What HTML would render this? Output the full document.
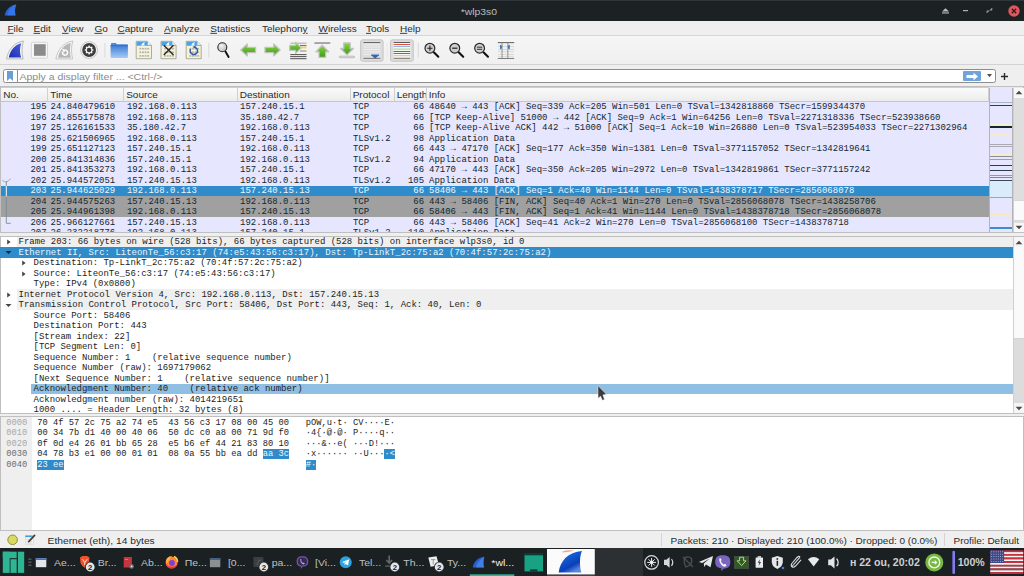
<!DOCTYPE html>
<html><head><meta charset="utf-8"><style>
*{margin:0;padding:0;box-sizing:border-box}
html,body{width:1024px;height:576px;overflow:hidden;background:#efefef;font-family:"Liberation Sans",sans-serif;font-size:10px;color:#232627}
.a{position:absolute}
#title{position:absolute;left:0;top:0;width:1024px;height:21px;background:#1c2124;border-top:1px solid #30363a}
#menubar{position:absolute;left:0;top:21px;width:1024px;height:14.5px;background:#efefef;border-bottom:1px solid #d6d6d6}
.mi{position:absolute;top:22.6px;font-size:10px;color:#2a2c2d;white-space:pre;transform:scaleY(0.88);transform-origin:0 9px}
.mi u{text-decoration:underline;text-decoration-thickness:0.8px;text-underline-offset:1.2px}
#toolbar{position:absolute;left:0;top:35.5px;width:1024px;height:29px;background:linear-gradient(#f5f5f5,#f0f0f0);border-bottom:1px solid #d3d3d3}
#filterbar{position:absolute;left:0;top:64.5px;width:1024px;height:21.5px;background:#efefef}
#fbox{position:absolute;left:2.9px;top:69.2px;width:993px;height:13.5px;background:#fff;border:1px solid #8d8d8d;border-radius:2.5px}
#plist{position:absolute;left:0;top:86px;width:1024px;height:147px;background:#e7e6ff;border:1px solid #bfbfbf}
.hdr{position:absolute;top:87px;height:14.5px;overflow:hidden;border-top:1px solid #cdcdcd;background:linear-gradient(#fafafa,#ececec);border-right:1px solid #d0d0d0;border-bottom:1px solid #c6c6c6;font-size:10px;color:#232627}
.hdr span{position:absolute;top:0.6px;left:2.2px;white-space:pre;transform:scaleY(0.88);transform-origin:0 9px;color:#2a2c2d}
.r{position:absolute;left:1px;width:988px;height:10.5px;background:#e7e6ff;color:#12272e;font-family:"Liberation Mono",monospace;font-size:8.975px;line-height:10.5px}
.r.sel{background:#2f8bc9;color:#f2f6fa}
.r.fin{background:#a0a0a0;color:#12272e}
.c{position:absolute;top:0.6px;white-space:pre;transform:scaleY(1.1);transform-origin:0 8px}
#det{position:absolute;left:0;top:235.5px;width:1024px;height:178px;background:#fff;border:1px solid #bfbfbf}
.d{position:absolute;height:10.5px;right:11px}
.d.top{background:#efefef}
.d.sel{background:#2f8bc9}
.d.rel{background:#8fbfe2}
.dt{position:absolute;white-space:pre;transform:scaleY(1.08);transform-origin:0 8px;font-family:"Liberation Mono",monospace;font-size:8.975px;line-height:10.5px;color:#1d1d1d}
.dt.wt{color:#eef4f8}
.ar{position:absolute}
#hex{position:absolute;left:0;top:416px;width:1024px;height:115px;background:#fff;border:1px solid #bfbfbf}
#hexoff{position:absolute;left:1px;top:417px;width:31px;height:113px;background:#efefef}
.ho{position:absolute;left:6.2px;white-space:pre;font-family:"Liberation Mono",monospace;font-size:8.745px;line-height:10.5px;color:#a9a9a9}
.ho.hod{color:#6d6d6d}
.hx{position:absolute;left:37.3px;white-space:pre;font-family:"Liberation Mono",monospace;font-size:8.745px;line-height:10.5px;color:#1d1d1d}
.hs{background:#2f8bc9;color:#f2f6fa}
#status{position:absolute;left:0;top:531px;width:1024px;height:17px;background:#efefef}
.st{position:absolute;top:534.7px;white-space:pre;font-size:10px;color:#2a2c2d;transform:scaleY(0.88);transform-origin:0 9px}
#taskbar{position:absolute;left:0;top:548px;width:1024px;height:28px;background:#1c2124}
.tt{position:absolute;top:556px;white-space:pre;font-size:10.5px;color:#c6c8c9;transform:scaleY(0.92);transform-origin:0 9px}
.badge{position:absolute;width:9.5px;height:9.5px;border-radius:50%;background:#d9dbdc;border:1px solid #2a2f32;color:#1c2124;font-size:7.5px;font-weight:bold;text-align:center;line-height:8px}
</style></head><body>
<div id="title"></div>
<svg class="a" style="left:3.5px;top:4px" width="13" height="12" viewBox="0 0 13 12"><path d="M12.3 0.6 C8 1 2.5 4 0.6 11.4 L11.6 11.4 C10.6 8 10.8 4 12.3 0.6Z" fill="#2a63d6"/><path d="M12.3 0.6 C9 1.5 5 4.5 3.5 11.4 L11.6 11.4 C10.6 8 10.8 4 12.3 0.6Z" fill="#3d7ff0" opacity="0.6"/></svg>
<span class="a" style="left:460.7px;top:5.6px;color:#b9bdbf;font-size:10.4px;white-space:pre;transform:scaleY(0.9);transform-origin:0 9px">*wlp3s0</span>
<svg class="a" style="left:0;top:0" width="1024" height="21" viewBox="0 0 1024 21"><path d="M945.5 8.3 L949 11.6 H942Z" fill="#b6c0c2"/><rect x="942" y="12.4" width="7" height="1.1" fill="#b6c0c2"/><rect x="963" y="10" width="5" height="1.2" fill="#a9b1b3"/><path d="M992.4 7.8 L992.2 10.6 L989.6 10.4Z M986.5 13.2 L986.7 10.4 L989.3 10.6Z" fill="#8f999b"/><path d="M989.6 10.4 L992 8.2 M989.3 10.6 L987 12.8" stroke="#8f999b" stroke-width="0.7"/></svg>
<svg class="a" style="left:1007.5px;top:4.5px" width="12" height="12" viewBox="0 0 12 12"><circle cx="6" cy="6" r="5.7" fill="#e2575d"/><path d="M3.8 3.8 L8.2 8.2 M8.2 3.8 L3.8 8.2" stroke="#2b1b1c" stroke-width="1.3"/></svg>

<div id="menubar"></div>
<span class="mi" style="left:7.5px"><u>F</u>ile</span><span class="mi" style="left:33.5px"><u>E</u>dit</span><span class="mi" style="left:62px"><u>V</u>iew</span><span class="mi" style="left:94.5px"><u>G</u>o</span><span class="mi" style="left:117.5px"><u>C</u>apture</span><span class="mi" style="left:164px"><u>A</u>nalyze</span><span class="mi" style="left:210.3px"><u>S</u>tatistics</span><span class="mi" style="left:262px">Telephon<u>y</u></span><span class="mi" style="left:318.5px"><u>W</u>ireless</span><span class="mi" style="left:366px"><u>T</u>ools</span><span class="mi" style="left:400px"><u>H</u>elp</span>
<div id="toolbar"></div>
<svg class="a" style="left:0;top:0" width="1024" height="66" viewBox="0 0 1024 66"><defs>
<linearGradient id="gblue" x1="0" y1="1" x2="1" y2="0"><stop offset="0" stop-color="#1e2ab0"/><stop offset="1" stop-color="#4560e0"/></linearGradient>
<linearGradient id="gfold" x1="0" y1="0" x2="0" y2="1"><stop offset="0" stop-color="#3d7ad6"/><stop offset="1" stop-color="#a8cbf6"/></linearGradient>
<linearGradient id="ggreen" x1="0" y1="0" x2="0" y2="1"><stop offset="0" stop-color="#8ad443"/><stop offset="1" stop-color="#3d9a1e"/></linearGradient>
<radialGradient id="gmag" cx="0.4" cy="0.35" r="0.7"><stop offset="0" stop-color="#f4f4f4"/><stop offset="1" stop-color="#b8b8b8"/></radialGradient>
</defs><path d="M6.6 58.9 C8 50 14 42.5 23.4 41 C21.6 46 21.6 53 23.1 58.9 Z" fill="#f6f6f6" stroke="#aaaaaa" stroke-width="0.8"/><path d="M8.8 57.6 C10 50.5 15 44.5 21.2 43.2 C19.6 48 19.6 53 21.2 57.6 Z" fill="url(#gblue)"/><rect x="31.3" y="42.3" width="16.2" height="15.9" rx="1" fill="#f6f6f6" stroke="#cdcdcd" stroke-width="0.8"/><rect x="34" y="44.2" width="11.7" height="11.6" fill="#8b8b8b"/><path d="M55.9 58.9 C57.3 50 63.3 42.5 72.9 41 C71.1 46 71.1 53 72.6 58.9 Z" fill="#f6f6f6" stroke="#bdbdbd" stroke-width="0.8"/><path d="M58 57.8 C59.3 50.5 64.3 44.5 70.8 43.1 C69.7 48 69.8 53 70.8 57.8 Z" fill="#b7b7b7"/><path d="M65.4 50 A2.6 2.6 0 1 1 62.6 51.6" fill="none" stroke="#fafafa" stroke-width="1.6"/><path d="M62 48.6 L66.2 50 L63.6 52.6Z" fill="#fafafa"/><circle cx="89.1" cy="50" r="8.4" fill="#f9f9f9" stroke="#b4b4b4" stroke-width="0.8"/><circle cx="89.1" cy="50" r="6.9" fill="#3d3d3d"/><polygon points="92.52,49.25 93.56,49.38 93.56,50.62 92.52,50.75 92.05,51.89 92.69,52.72 91.82,53.59 90.99,52.95 89.85,53.42 89.72,54.46 88.48,54.46 88.35,53.42 87.21,52.95 86.38,53.59 85.51,52.72 86.15,51.89 85.68,50.75 84.64,50.62 84.64,49.38 85.68,49.25 86.15,48.11 85.51,47.28 86.38,46.41 87.21,47.05 88.35,46.58 88.48,45.54 89.72,45.54 89.85,46.58 90.99,47.05 91.82,46.41 92.69,47.28 92.05,48.11" fill="#f4f4f4"/><circle cx="89.1" cy="50" r="2.3" fill="#3d3d3d"/><rect x="104.5" y="43" width="0.9" height="14.5" fill="#d6d6d6"/><rect x="208.4" y="43" width="0.9" height="14.5" fill="#d6d6d6"/><rect x="417.8" y="43" width="0.9" height="14.5" fill="#d6d6d6"/><path d="M111 45.2 V43.9 Q111 43.1 111.8 43.1 H115.8 L116.8 44.3 H127 Q127.9 44.3 127.9 45.2Z" fill="#4f8ad8"/><rect x="110.6" y="45" width="17.3" height="13.1" rx="0.8" fill="url(#gfold)"/><rect x="110.6" y="45" width="17.3" height="1.2" fill="#3a6fc4"/><path d="M136.2 41.3 H147.5 L151.5 45.3 V58.699999999999996 H136.2 Z" fill="#f4f2dc" stroke="#9c9a88" stroke-width="0.8"/><path d="M136.6 41.699999999999996 H147.5 L151.1 45.3 V45.8 H136.6 Z" fill="#4aa3e8"/><path d="M147.5 41.3 V45.3 H151.5" fill="#e8f4fc" stroke="#9c9a88" stroke-width="0.5"/><path d="M141.2 45.599999999999994 C141.7 43.8 143.2 42.5 144.7 42.3 C144.2 43.5 144.2 44.599999999999994 144.5 45.599999999999994Z" fill="#fff"/><rect x="139.40" y="47.90" width="1.9" height="1.6" fill="#b4b3a6"/><rect x="142.00" y="47.90" width="1.9" height="1.6" fill="#b4b3a6"/><rect x="144.60" y="47.90" width="1.9" height="1.6" fill="#b4b3a6"/><rect x="147.20" y="47.90" width="1.9" height="1.6" fill="#b4b3a6"/><rect x="139.40" y="51.50" width="1.9" height="1.6" fill="#b4b3a6"/><rect x="142.00" y="51.50" width="1.9" height="1.6" fill="#b4b3a6"/><rect x="144.60" y="51.50" width="1.9" height="1.6" fill="#b4b3a6"/><rect x="147.20" y="51.50" width="1.9" height="1.6" fill="#b4b3a6"/><rect x="139.40" y="55.10" width="1.9" height="1.6" fill="#b4b3a6"/><rect x="142.00" y="55.10" width="1.9" height="1.6" fill="#b4b3a6"/><rect x="144.60" y="55.10" width="1.9" height="1.6" fill="#b4b3a6"/><rect x="147.20" y="55.10" width="1.9" height="1.6" fill="#b4b3a6"/><path d="M161.0 41.3 H172.1 L176.1 45.3 V58.699999999999996 H161.0 Z" fill="#f4f2dc" stroke="#9c9a88" stroke-width="0.8"/><path d="M161.4 41.699999999999996 H172.1 L175.7 45.3 V45.8 H161.4 Z" fill="#4aa3e8"/><path d="M172.1 41.3 V45.3 H176.1" fill="#e8f4fc" stroke="#9c9a88" stroke-width="0.5"/><path d="M166.0 45.599999999999994 C166.5 43.8 168.0 42.5 169.5 42.3 C169.0 43.5 169.0 44.599999999999994 169.3 45.599999999999994Z" fill="#fff"/><rect x="164.20" y="47.90" width="1.9" height="1.6" fill="#b4b3a6"/><rect x="166.80" y="47.90" width="1.9" height="1.6" fill="#b4b3a6"/><rect x="169.40" y="47.90" width="1.9" height="1.6" fill="#b4b3a6"/><rect x="172.00" y="47.90" width="1.9" height="1.6" fill="#b4b3a6"/><rect x="164.20" y="51.50" width="1.9" height="1.6" fill="#b4b3a6"/><rect x="166.80" y="51.50" width="1.9" height="1.6" fill="#b4b3a6"/><rect x="169.40" y="51.50" width="1.9" height="1.6" fill="#b4b3a6"/><rect x="172.00" y="51.50" width="1.9" height="1.6" fill="#b4b3a6"/><rect x="164.20" y="55.10" width="1.9" height="1.6" fill="#b4b3a6"/><rect x="166.80" y="55.10" width="1.9" height="1.6" fill="#b4b3a6"/><rect x="169.40" y="55.10" width="1.9" height="1.6" fill="#b4b3a6"/><rect x="172.00" y="55.10" width="1.9" height="1.6" fill="#b4b3a6"/><path d="M163.8 45.2 L173.5 55 M173.5 45.2 L163.8 55" stroke="#2b2b2b" stroke-width="1.45"/><path d="M186.2 41.3 H197.2 L201.2 45.3 V58.699999999999996 H186.2 Z" fill="#f4f2dc" stroke="#9c9a88" stroke-width="0.8"/><path d="M186.6 41.699999999999996 H197.2 L200.79999999999998 45.3 V45.8 H186.6 Z" fill="#4aa3e8"/><path d="M197.2 41.3 V45.3 H201.2" fill="#e8f4fc" stroke="#9c9a88" stroke-width="0.5"/><path d="M191.2 45.599999999999994 C191.7 43.8 193.2 42.5 194.7 42.3 C194.2 43.5 194.2 44.599999999999994 194.5 45.599999999999994Z" fill="#fff"/><rect x="189.40" y="47.90" width="1.9" height="1.6" fill="#b4b3a6"/><rect x="192.00" y="47.90" width="1.9" height="1.6" fill="#b4b3a6"/><rect x="194.60" y="47.90" width="1.9" height="1.6" fill="#b4b3a6"/><rect x="197.20" y="47.90" width="1.9" height="1.6" fill="#b4b3a6"/><rect x="189.40" y="51.50" width="1.9" height="1.6" fill="#b4b3a6"/><rect x="192.00" y="51.50" width="1.9" height="1.6" fill="#b4b3a6"/><rect x="194.60" y="51.50" width="1.9" height="1.6" fill="#b4b3a6"/><rect x="197.20" y="51.50" width="1.9" height="1.6" fill="#b4b3a6"/><rect x="189.40" y="55.10" width="1.9" height="1.6" fill="#b4b3a6"/><rect x="192.00" y="55.10" width="1.9" height="1.6" fill="#b4b3a6"/><rect x="194.60" y="55.10" width="1.9" height="1.6" fill="#b4b3a6"/><rect x="197.20" y="55.10" width="1.9" height="1.6" fill="#b4b3a6"/><path d="M193.8 47.1 A3.7 3.7 0 1 1 190.6 49" fill="none" stroke="#2f5cae" stroke-width="1.5"/><path d="M192.6 47.1 L195.6 45.4 L195.6 48.8 Z" fill="#2f5cae"/><line x1="225.3" y1="51.2" x2="228.6" y2="56.9" stroke="#111" stroke-width="1.9" stroke-linecap="round"/><circle cx="222.3" cy="47.2" r="4.5" fill="url(#gmag)" stroke="#2d2d2d" stroke-width="1.1"/><path d="M240.8 49.9 L247.3 43.9 V47.3 H255.6 V52.6 H247.3 V55.9 Z" fill="url(#ggreen)" stroke="#c2c2c2" stroke-width="1.3" stroke-linejoin="round"/><path d="M280.2 49.9 L273.7 43.9 V47.3 H265 V52.6 H273.7 V55.9 Z" fill="url(#ggreen)" stroke="#c2c2c2" stroke-width="1.3" stroke-linejoin="round"/><rect x="290.5" y="42.7" width="16" height="1" fill="#a8a8a8"/><rect x="300" y="45.2" width="6.5" height="0.9" fill="#555"/><rect x="301" y="46.6" width="5.5" height="1.8" fill="#f0dc3c"/><rect x="300" y="50.4" width="6.5" height="1.2" fill="#9a9a9a"/><rect x="290.2" y="54.1" width="16.3" height="1" fill="#505050"/><rect x="290.2" y="56.1" width="16.3" height="1" fill="#505050"/><rect x="290.2" y="58.2" width="16.3" height="1" fill="#505050"/><path d="M301.2 47.8 L295.6 42.2 V45.3 H289.7 V50.4 H295.6 V53.5 Z" fill="url(#ggreen)" stroke="#c4c4c4" stroke-width="1.2" stroke-linejoin="round"/><rect x="314.4" y="42.3" width="15.9" height="1.5" fill="#8e8e8e"/><path d="M322.3 45.2 L328.6 51.8 H325.6 V57.4 H319 V51.8 H316 Z" fill="url(#ggreen)" stroke="#c2c2c2" stroke-width="1.3" stroke-linejoin="round"/><path d="M343.8 43 H350.2 V48.5 H353.4 L347 54.9 L340.6 48.5 H343.8 Z" fill="url(#ggreen)" stroke="#c2c2c2" stroke-width="1.3" stroke-linejoin="round"/><rect x="339.3" y="56.2" width="15.3" height="1.5" rx="0.6" fill="#efefef" stroke="#9a9a9a" stroke-width="0.6"/><rect x="360.6" y="39.8" width="22.5" height="21.5" rx="2" fill="#dcdcdc" stroke="#bdbdbd" stroke-width="0.8"/><rect x="363.5" y="42" width="16.8" height="0.9" fill="#5c5c5c"/><rect x="363.5" y="44.4" width="16.8" height="0.8" fill="#f3f3f3"/><rect x="363.5" y="46.6" width="16.8" height="0.8" fill="#f3f3f3"/><rect x="363.5" y="49.0" width="16.8" height="0.8" fill="#f3f3f3"/><rect x="363.5" y="51.5" width="16.8" height="0.8" fill="#f3f3f3"/><rect x="363.5" y="54.0" width="16.8" height="0.8" fill="#f3f3f3"/><rect x="363.5" y="57.9" width="16.8" height="0.9" fill="#6d6d6d"/><rect x="386.8" y="43" width="0.6" height="14.5" fill="#e0e0e0"/><path d="M371 54.4 H379.2 Q379.4 54.6 379 55.2 L375.6 58.2 Q375.1 58.6 374.6 58.2 L371.2 55.2 Q370.8 54.6 371 54.4Z" fill="#3068b8"/><rect x="390.5" y="39.8" width="22.8" height="21.5" rx="2" fill="#dcdcdc" stroke="#bdbdbd" stroke-width="0.8"/><rect x="393.5" y="42" width="17" height="17" fill="#f7f7f5"/><rect x="393.6" y="42" width="16.6" height="1" fill="#5a5a5a"/><rect x="393.6" y="44" width="16.6" height="1" fill="#e84a44"/><rect x="393.6" y="46" width="16.6" height="1" fill="#93b6e0"/><rect x="393.6" y="48.6" width="16.6" height="1" fill="#96dd72"/><rect x="393.6" y="51" width="16.6" height="1" fill="#3d6fc0"/><rect x="393.6" y="53" width="16.6" height="1" fill="#8a5c9c"/><rect x="393.6" y="55.2" width="16.6" height="1" fill="#dcc874"/><rect x="393.6" y="57.8" width="16.6" height="1" fill="#727272"/><line x1="433.79999999999995" y1="52.3" x2="438.29999999999995" y2="56.7" stroke="#111" stroke-width="2.1" stroke-linecap="round"/><circle cx="429.9" cy="48.2" r="4.9" fill="#cfcfcf" stroke="#2b2b2b" stroke-width="1.2"/><path d="M427.29999999999995 48.2 H432.5 M429.9 45.6 V50.8" stroke="#222" stroke-width="1.1"/><line x1="458.7" y1="52.3" x2="463.2" y2="56.7" stroke="#111" stroke-width="2.1" stroke-linecap="round"/><circle cx="454.8" cy="48.2" r="4.9" fill="#cfcfcf" stroke="#2b2b2b" stroke-width="1.2"/><path d="M452.2 48.2 H457.40000000000003" stroke="#222" stroke-width="1.2"/><line x1="483.5" y1="52.3" x2="488.0" y2="56.7" stroke="#111" stroke-width="2.1" stroke-linecap="round"/><circle cx="479.6" cy="48.2" r="4.9" fill="#cfcfcf" stroke="#2b2b2b" stroke-width="1.2"/><path d="M477.0 47.2 H482.20000000000005 M477.0 49.3 H482.20000000000005" stroke="#222" stroke-width="0.9"/><rect x="498" y="42.5" width="16" height="16.2" fill="#f1f1ee"/><rect x="498" y="46.0" width="16" height="0.6" fill="#c9c9c3"/><rect x="498" y="49.0" width="16" height="0.6" fill="#c9c9c3"/><rect x="498" y="51.5" width="16" height="0.6" fill="#c9c9c3"/><rect x="498" y="54.0" width="16" height="0.6" fill="#c9c9c3"/><rect x="498" y="56.5" width="16" height="0.6" fill="#c9c9c3"/><rect x="497.8" y="42.2" width="16.4" height="0.9" fill="#4f4f4f"/><rect x="497.8" y="58" width="16.4" height="0.9" fill="#6f6f6f"/><rect x="501.6" y="43" width="0.9" height="15" fill="#8a8a8a"/><rect x="507.4" y="43" width="0.9" height="15" fill="#8a8a8a"/><path d="M500 44.8 A2 2.2 0 0 1 500 49.2 Z" fill="#3a74c6"/><path d="M509.8 44.8 A2 2.2 0 0 0 509.8 49.2 Z" fill="#3a74c6"/></svg>
<div id="filterbar"></div>
<div id="fbox"></div>
<div class="a" style="left:16.5px;top:70px;width:1px;height:12px;background:#8d8d8d"></div>
<svg class="a" style="left:6.8px;top:70.6px" width="6" height="10" viewBox="0 0 6 10"><path d="M0 0 H6 V10 L3 7.2 L0 10Z" fill="#6a9fd6"/></svg>
<span class="a" style="left:19.5px;top:69.8px;color:#8c8c8c;font-size:10.5px;white-space:pre;transform:scaleY(0.86);transform-origin:0 9.5px">Apply a display filter ... &lt;Ctrl-/&gt;</span>
<div class="a" style="left:963.4px;top:70.7px;width:17.7px;height:10.1px;background:#6fa3da;border-radius:1px"></div>
<svg class="a" style="left:965px;top:71.5px" width="15" height="9" viewBox="0 0 15 9"><path d="M1.5 3 H8.5 V0.8 L13 4.5 L8.5 8.2 V6 H1.5Z" fill="#fff"/></svg>
<svg class="a" style="left:987px;top:74px" width="5" height="4" viewBox="0 0 5 4"><path d="M0 0 H5 L2.5 3.2Z" fill="#505050"/></svg>
<svg class="a" style="left:1001px;top:72.5px" width="7" height="7" viewBox="0 0 7 7"><path d="M3.5 0 V7 M0 3.5 H7" stroke="#2a2a2a" stroke-width="1.4"/></svg>

<div id="plist"></div>
<div class="hdr" style="left:1px;width:47px"><span>No.</span></div><div class="hdr" style="left:48px;width:76px"><span>Time</span></div><div class="hdr" style="left:124px;width:113.5px"><span>Source</span></div><div class="hdr" style="left:237.5px;width:113px"><span>Destination</span></div><div class="hdr" style="left:350.5px;width:44px"><span>Protocol</span></div><div class="hdr" style="left:394.5px;width:32px"><span>Length</span></div><div class="hdr" style="left:426.5px;width:562.5px"><span>Info</span></div>

<div class="a" style="left:0;top:0;width:1024px;height:232px;overflow:hidden"><div class="r" style="top:101.50px"><span class="c" style="right:942.4px;text-align:right">195</span><span class="c" style="left:49.6px">24.840479610</span><span class="c" style="left:125.9px">192.168.0.113</span><span class="c" style="left:239px">157.240.15.1</span><span class="c" style="left:351.9px">TCP</span><span class="c" style="right:564.9px;text-align:right">66</span><span class="c" style="left:428.1px">48640 → 443 [ACK] Seq=339 Ack=205 Win=501 Len=0 TSval=1342818860 TSecr=1599344370</span></div><div class="r" style="top:112.00px"><span class="c" style="right:942.4px;text-align:right">196</span><span class="c" style="left:49.6px">24.855175878</span><span class="c" style="left:125.9px">192.168.0.113</span><span class="c" style="left:239px">35.180.42.7</span><span class="c" style="left:351.9px">TCP</span><span class="c" style="right:564.9px;text-align:right">66</span><span class="c" style="left:428.1px">[TCP Keep-Alive] 51000 → 442 [ACK] Seq=9 Ack=1 Win=64256 Len=0 TSval=2271318336 TSecr=523938660</span></div><div class="r" style="top:122.50px"><span class="c" style="right:942.4px;text-align:right">197</span><span class="c" style="left:49.6px">25.126161533</span><span class="c" style="left:125.9px">35.180.42.7</span><span class="c" style="left:239px">192.168.0.113</span><span class="c" style="left:351.9px">TCP</span><span class="c" style="right:564.9px;text-align:right">66</span><span class="c" style="left:428.1px">[TCP Keep-Alive ACK] 442 → 51000 [ACK] Seq=1 Ack=10 Win=26880 Len=0 TSval=523954033 TSecr=2271302964</span></div><div class="r" style="top:133.00px"><span class="c" style="right:942.4px;text-align:right">198</span><span class="c" style="left:49.6px">25.621506965</span><span class="c" style="left:125.9px">192.168.0.113</span><span class="c" style="left:239px">157.240.15.1</span><span class="c" style="left:351.9px">TLSv1.2</span><span class="c" style="right:564.9px;text-align:right">98</span><span class="c" style="left:428.1px">Application Data</span></div><div class="r" style="top:143.50px"><span class="c" style="right:942.4px;text-align:right">199</span><span class="c" style="left:49.6px">25.651127123</span><span class="c" style="left:125.9px">157.240.15.1</span><span class="c" style="left:239px">192.168.0.113</span><span class="c" style="left:351.9px">TCP</span><span class="c" style="right:564.9px;text-align:right">66</span><span class="c" style="left:428.1px">443 → 47170 [ACK] Seq=177 Ack=350 Win=1381 Len=0 TSval=3771157052 TSecr=1342819641</span></div><div class="r" style="top:154.00px"><span class="c" style="right:942.4px;text-align:right">200</span><span class="c" style="left:49.6px">25.841314836</span><span class="c" style="left:125.9px">157.240.15.1</span><span class="c" style="left:239px">192.168.0.113</span><span class="c" style="left:351.9px">TLSv1.2</span><span class="c" style="right:564.9px;text-align:right">94</span><span class="c" style="left:428.1px">Application Data</span></div><div class="r" style="top:164.50px"><span class="c" style="right:942.4px;text-align:right">201</span><span class="c" style="left:49.6px">25.841353273</span><span class="c" style="left:125.9px">192.168.0.113</span><span class="c" style="left:239px">157.240.15.1</span><span class="c" style="left:351.9px">TCP</span><span class="c" style="right:564.9px;text-align:right">66</span><span class="c" style="left:428.1px">47170 → 443 [ACK] Seq=350 Ack=205 Win=2972 Len=0 TSval=1342819861 TSecr=3771157242</span></div><div class="r" style="top:175.00px"><span class="c" style="right:942.4px;text-align:right">202</span><span class="c" style="left:49.6px">25.944572051</span><span class="c" style="left:125.9px">157.240.15.13</span><span class="c" style="left:239px">192.168.0.113</span><span class="c" style="left:351.9px">TLSv1.2</span><span class="c" style="right:564.9px;text-align:right">105</span><span class="c" style="left:428.1px">Application Data</span></div><div class="r sel" style="top:185.50px"><span class="c" style="right:942.4px;text-align:right">203</span><span class="c" style="left:49.6px">25.944625029</span><span class="c" style="left:125.9px">192.168.0.113</span><span class="c" style="left:239px">157.240.15.13</span><span class="c" style="left:351.9px">TCP</span><span class="c" style="right:564.9px;text-align:right">66</span><span class="c" style="left:428.1px">58406 → 443 [ACK] Seq=1 Ack=40 Win=1144 Len=0 TSval=1438378717 TSecr=2856068078</span></div><div class="r fin" style="top:196.00px"><span class="c" style="right:942.4px;text-align:right">204</span><span class="c" style="left:49.6px">25.944575263</span><span class="c" style="left:125.9px">157.240.15.13</span><span class="c" style="left:239px">192.168.0.113</span><span class="c" style="left:351.9px">TCP</span><span class="c" style="right:564.9px;text-align:right">66</span><span class="c" style="left:428.1px">443 → 58406 [FIN, ACK] Seq=40 Ack=1 Win=270 Len=0 TSval=2856068078 TSecr=1438258706</span></div><div class="r fin" style="top:206.50px"><span class="c" style="right:942.4px;text-align:right">205</span><span class="c" style="left:49.6px">25.944961398</span><span class="c" style="left:125.9px">192.168.0.113</span><span class="c" style="left:239px">157.240.15.13</span><span class="c" style="left:351.9px">TCP</span><span class="c" style="right:564.9px;text-align:right">66</span><span class="c" style="left:428.1px">58406 → 443 [FIN, ACK] Seq=1 Ack=41 Win=1144 Len=0 TSval=1438378718 TSecr=2856068078</span></div><div class="r" style="top:217.00px"><span class="c" style="right:942.4px;text-align:right">206</span><span class="c" style="left:49.6px">25.966127661</span><span class="c" style="left:125.9px">157.240.15.13</span><span class="c" style="left:239px">192.168.0.113</span><span class="c" style="left:351.9px">TCP</span><span class="c" style="right:564.9px;text-align:right">66</span><span class="c" style="left:428.1px">443 → 58406 [ACK] Seq=41 Ack=2 Win=270 Len=0 TSval=2856068100 TSecr=1438378718</span></div><div class="r" style="top:227.50px"><span class="c" style="right:942.4px;text-align:right">207</span><span class="c" style="left:49.6px">26.232218776</span><span class="c" style="left:125.9px">192.168.0.113</span><span class="c" style="left:239px">157.240.15.1</span><span class="c" style="left:351.9px">TLSv1.2</span><span class="c" style="right:564.9px;text-align:right">110</span><span class="c" style="left:428.1px">Application Data</span></div></div>
<div class="a" style="left:989px;top:87.5px;width:24px;height:144.5px;background:#e7e6ff;border-left:1px solid #b4b4b8;border-right:1px solid #b4b4b8"></div><div class="a" style="left:990px;top:102.4px;width:22px;height:1.0px;background:#aab2c8"></div><div class="a" style="left:990px;top:104.8px;width:22px;height:1.2px;background:#2b3c4e"></div><div class="a" style="left:990px;top:124.3px;width:22px;height:0.9px;background:#f6efd6"></div><div class="a" style="left:990px;top:126.4px;width:22px;height:1.5px;background:#14262e"></div><div class="a" style="left:990px;top:134.3px;width:22px;height:0.9px;background:#f8ebc8"></div><div class="a" style="left:990px;top:144.2px;width:22px;height:0.9px;background:#a9a9b4"></div><div class="a" style="left:990px;top:145.9px;width:22px;height:0.9px;background:#a9a9b4"></div><div class="a" style="left:990px;top:154.0px;width:22px;height:0.9px;background:#f6ecd0"></div><div class="a" style="left:990px;top:156.4px;width:22px;height:0.9px;background:#8a9098"></div><div class="a" style="left:990px;top:158.9px;width:22px;height:0.9px;background:#9aa0a8"></div><div class="a" style="left:990px;top:164.5px;width:22px;height:1.3px;background:#2a3d4a"></div><div class="a" style="left:990px;top:170.4px;width:22px;height:1.0px;background:#2a3d4a"></div><div class="a" style="left:990px;top:175.0px;width:22px;height:1.0px;background:#8f9aaa"></div><div class="a" style="left:990px;top:177.2px;width:22px;height:1.0px;background:#7b8594"></div><div class="a" style="left:990px;top:179.6px;width:22px;height:1.3px;background:#3a4a58"></div><div class="a" style="left:990px;top:181.6px;width:22px;height:15.0px;background:#d9ecfb"></div><div class="a" style="left:990px;top:196.6px;width:22px;height:1.0px;background:#a4a4a8"></div><div class="a" style="left:990px;top:213.6px;width:22px;height:1.0px;background:#f9e6b8"></div><div class="a" style="left:990px;top:217.0px;width:22px;height:1.0px;background:#f9e6b8"></div><div class="a" style="left:990px;top:227.3px;width:22px;height:1.5px;background:#3d8ccc"></div><div class="a" style="left:1013px;top:87.5px;width:11px;height:144.5px;background:#dedede;border-left:1px solid #cfcfcf"></div><div class="a" style="left:1013.5px;top:88px;width:10.5px;height:9.6px;background:#f8f8f8"></div><svg class="a" style="left:1015px;top:89.8px" width="8" height="5" viewBox="0 0 8 5"><path d="M0.6 4.2 L4 0.8 L7.4 4.2Z" fill="#4a4a4a"/></svg><div class="a" style="left:1013.5px;top:199.7px;width:10.5px;height:21px;background:#fafafa;border-top:1px solid #d8d8d8;border-bottom:1px solid #d8d8d8"></div><div class="a" style="left:1013.5px;top:222.5px;width:10.5px;height:9.5px;background:#f8f8f8"></div><svg class="a" style="left:1015px;top:225px" width="8" height="5" viewBox="0 0 8 5"><path d="M0.6 0.8 L4 4.2 L7.4 0.8Z" fill="#4a4a4a"/></svg>
<svg class="a" style="left:0;top:170px" width="14" height="62" viewBox="0 170 14 62"><path d="M6.3 181 V223.3 H10.8" fill="none" stroke="#7d8b92" stroke-width="0.9"/><path d="M2.3 180.2 Q4.5 182 6.3 182.3 Q8.5 181 10.8 178.6" fill="none" stroke="#8d989e" stroke-width="0.8"/><rect x="5.8" y="186" width="1" height="10.5" fill="#f0f6fb"/></svg>
<div id="det"></div>
<div class="d top" style="top:236.80px;left:16.5px"></div><svg class="ar" style="left:5.7px;top:239.30px" width="6" height="6" viewBox="0 0 6 6"><path d="M1.2 0.5 L4.6 3 L1.2 5.5Z" fill="#444"/></svg><span class="dt" style="left:18.5px;top:237.20px">Frame 203: 66 bytes on wire (528 bits), 66 bytes captured (528 bits) on interface wlp3s0, id 0</span><div class="d sel" style="top:247.30px;left:0px"></div><svg class="ar" style="left:5.2px;top:250.30px" width="7" height="5" viewBox="0 0 7 5"><path d="M0.5 1 L6.5 1 L3.5 4Z" fill="#12272e"/></svg><span class="dt wt" style="left:18.5px;top:247.70px">Ethernet II, Src: LiteonTe_56:c3:17 (74:e5:43:56:c3:17), Dst: Tp-LinkT_2c:75:a2 (70:4f:57:2c:75:a2)</span><div class="d " style="top:257.80px;left:30.8px"></div><svg class="ar" style="left:20.7px;top:260.30px" width="6" height="6" viewBox="0 0 6 6"><path d="M1.2 0.5 L4.6 3 L1.2 5.5Z" fill="#444"/></svg><span class="dt" style="left:33.5px;top:258.20px">Destination: Tp-LinkT_2c:75:a2 (70:4f:57:2c:75:a2)</span><div class="d " style="top:268.30px;left:30.8px"></div><svg class="ar" style="left:20.7px;top:270.80px" width="6" height="6" viewBox="0 0 6 6"><path d="M1.2 0.5 L4.6 3 L1.2 5.5Z" fill="#444"/></svg><span class="dt" style="left:33.5px;top:268.70px">Source: LiteonTe_56:c3:17 (74:e5:43:56:c3:17)</span><div class="d " style="top:278.80px;left:30.8px"></div><span class="dt" style="left:33.5px;top:279.20px">Type: IPv4 (0x0800)</span><div class="d top" style="top:289.30px;left:16.5px"></div><svg class="ar" style="left:5.7px;top:291.80px" width="6" height="6" viewBox="0 0 6 6"><path d="M1.2 0.5 L4.6 3 L1.2 5.5Z" fill="#444"/></svg><span class="dt" style="left:18.5px;top:289.70px">Internet Protocol Version 4, Src: 192.168.0.113, Dst: 157.240.15.13</span><div class="d top" style="top:299.80px;left:16.5px"></div><svg class="ar" style="left:5.2px;top:302.80px" width="7" height="5" viewBox="0 0 7 5"><path d="M0.5 1 L6.5 1 L3.5 4Z" fill="#444"/></svg><span class="dt" style="left:18.5px;top:300.20px">Transmission Control Protocol, Src Port: 58406, Dst Port: 443, Seq: 1, Ack: 40, Len: 0</span><div class="d " style="top:310.30px;left:30.8px"></div><span class="dt" style="left:33.5px;top:310.70px">Source Port: 58406</span><div class="d " style="top:320.80px;left:30.8px"></div><span class="dt" style="left:33.5px;top:321.20px">Destination Port: 443</span><div class="d " style="top:331.30px;left:30.8px"></div><span class="dt" style="left:33.5px;top:331.70px">[Stream index: 22]</span><div class="d " style="top:341.80px;left:30.8px"></div><span class="dt" style="left:33.5px;top:342.20px">[TCP Segment Len: 0]</span><div class="d " style="top:352.30px;left:30.8px"></div><span class="dt" style="left:33.5px;top:352.70px">Sequence Number: 1    (relative sequence number)</span><div class="d " style="top:362.80px;left:30.8px"></div><span class="dt" style="left:33.5px;top:363.20px">Sequence Number (raw): 1697179062</span><div class="d " style="top:373.30px;left:30.8px"></div><span class="dt" style="left:33.5px;top:373.70px">[Next Sequence Number: 1    (relative sequence number)]</span><div class="d rel" style="top:383.80px;left:30.8px"></div><span class="dt" style="left:33.5px;top:384.20px">Acknowledgment Number: 40    (relative ack number)</span><div class="d " style="top:394.30px;left:30.8px"></div><span class="dt" style="left:33.5px;top:394.70px">Acknowledgment number (raw): 4014219651</span><div class="d " style="top:404.80px;left:30.8px"></div><span class="dt" style="left:33.5px;top:405.20px">1000 .... = Header Length: 32 bytes (8)</span>
<div class="a" style="left:1013px;top:236.5px;width:11px;height:176.5px;background:#dcdcdc;border-left:1px solid #cfcfcf"></div><div class="a" style="left:1013.5px;top:237px;width:10.5px;height:10px;background:#f6f6f6"></div><svg class="a" style="left:1015px;top:239.8px" width="8" height="5" viewBox="0 0 8 5"><path d="M0.6 4.2 L4 0.8 L7.4 4.2Z" fill="#4a4a4a"/></svg><div class="a" style="left:1013.5px;top:247px;width:10.5px;height:92px;background:#fafafa;border-bottom:1px solid #d4d4d4"></div><div class="a" style="left:1013.5px;top:402.5px;width:10.5px;height:10.5px;background:#f6f6f6"></div><svg class="a" style="left:1015px;top:405.5px" width="8" height="5" viewBox="0 0 8 5"><path d="M0.6 0.8 L4 4.2 L7.4 0.8Z" fill="#4a4a4a"/></svg>
<svg class="a" style="left:590px;top:380px" width="24" height="24" viewBox="590 380 24 24"><path d="M597.9 385.6 L606.4 394.3 L602.9 394.9 L604.5 399.6 L602.3 400.3 L600.6 396.2 L598.1 398.3 Z" fill="#3b3b3b" stroke="#f4f4f4" stroke-width="0.5" stroke-linejoin="round"/></svg>
<div id="hex"></div>
<div id="hexoff"></div>
<span class="ho" style="top:417.70px">0000</span><span class="hx" style="top:417.70px">70 4f 57 2c 75 a2 74 e5  43 56 c3 17 08 00 45 00</span><span class="hx" style="left:305.8px;top:417.70px">pOW,u·t· CV····E·</span><span class="ho" style="top:428.20px">0010</span><span class="hx" style="top:428.20px">00 34 7b d1 40 00 40 06  50 dc c0 a8 00 71 9d f0</span><span class="hx" style="left:305.8px;top:428.20px">·4{·@·@· P····q··</span><span class="ho" style="top:438.70px">0020</span><span class="hx" style="top:438.70px">0f 0d e4 26 01 bb 65 28  e5 b6 ef 44 21 83 80 10</span><span class="hx" style="left:305.8px;top:438.70px">···&amp;··e( ···D!···</span><span class="ho hod" style="top:449.20px">0030</span><span class="hx" style="top:449.20px">04 78 b3 e1 00 00 01 01  08 0a 55 bb ea dd <span class="hs">aa 3c</span></span><span class="hx" style="left:305.8px;top:449.20px">·x······ ··U···<span class="hs">·&lt;</span></span><span class="ho hod" style="top:459.70px">0040</span><span class="hx" style="top:459.70px"><span class="hs">23 ee</span></span><span class="hx" style="left:305.8px;top:459.70px"><span class="hs">#·</span></span>
<div id="status"></div>
<svg class="a" style="left:6px;top:533px" width="32" height="14" viewBox="6 533 32 14"><circle cx="12.6" cy="539.8" r="4.8" fill="#dada5c" stroke="#84843a" stroke-width="0.9"/><rect x="25.4" y="535.8" width="8" height="8.4" fill="#f2f2ee" stroke="#d0d0c8" stroke-width="0.5"/><path d="M25.3 535.4 H32.5 V537.2 Q31 536.4 29.6 537.4 Q28.4 536.4 27 537.3 Q26 536.6 25.3 537.3Z" fill="#3d98dc"/><rect x="26.4" y="539.2" width="5.5" height="0.5" fill="#c8c8c0"/><rect x="26.4" y="541" width="5.5" height="0.5" fill="#c8c8c0"/><rect x="26.4" y="542.8" width="5.5" height="0.5" fill="#c8c8c0"/><path d="M28.7 541.6 L34.6 535.3" stroke="#3e3e3e" stroke-width="1.7" stroke-linecap="round"/></svg>
<span class="st" style="left:47.6px;font-size:10.25px">Ethernet (eth), 14 bytes</span>
<span class="st" style="left:670.5px">Packets: 210 · Displayed: 210 (100.0%) · Dropped: 0 (0.0%)</span>
<div class="a" style="left:944px;top:533px;width:1px;height:13px;background:#d4d4d4"></div><div class="a" style="left:661px;top:533px;width:1px;height:13px;background:#d4d4d4"></div>
<span class="st" style="left:953.5px">Profile: Default</span>
<div class="a" style="left:0;top:548px;width:1024px;height:28px;background:#1b2023"></div><div class="a" style="left:594.8px;top:548px;width:48px;height:28px;background:#2c3033"></div><svg class="a" style="left:0;top:548px" width="1024" height="28" viewBox="0 548 1024 28"><rect x="2.8" y="551.7" width="6.9" height="21.2" fill="#2db594"/><rect x="2.8" y="551.7" width="13.9" height="6.5" fill="#2db594"/><rect x="10.5" y="559.2" width="6.2" height="13.7" fill="#2db594"/><rect x="17.9" y="551.7" width="6.3" height="21.2" fill="#2db594"/><rect x="28.3" y="558.6" width="3.2" height="1.2" fill="#5c6266"/><rect x="28.3" y="561.6" width="3.2" height="1.2" fill="#5c6266"/><rect x="28.3" y="564.6" width="3.2" height="1.2" fill="#5c6266"/><rect x="35.8" y="558.2" width="10.5" height="9" fill="#e4e7ea"/><rect x="35.8" y="558.2" width="10.5" height="1.8" fill="#4671b8"/><path d="M80 557.5 L82.5 556 H87 L89.5 557.5 L89 563 Q87.5 566.5 84.8 567.8 Q82 566.5 80.5 563 Z" fill="#f1542a"/><path d="M82.5 559.2 L84.8 562.5 L87.2 559.2 M84.8 562.5 V565" stroke="#fff" stroke-width="0.8" fill="none"/><circle cx="90.2" cy="567" r="5.2" fill="#2a2f32"/><circle cx="90.2" cy="567" r="4.4" fill="#e6e7e8"/><text x="90.2" y="569.7" font-family="Liberation Sans" font-weight="bold" font-size="7.8" text-anchor="middle" fill="#1e2326">2</text><rect x="123.7" y="557" width="8.2" height="10.5" fill="#c7343c"/><rect x="125" y="559" width="3" height="0.8" fill="#f08080"/><circle cx="131.6" cy="566.4" r="2.3" fill="#6b6f71"/><circle cx="131.6" cy="566.4" r="0.9" fill="#e8e8e8"/><circle cx="171.6" cy="562.6" r="6" fill="#ff8330"/><circle cx="172" cy="563" r="2.9" fill="#7d3fd8"/><path d="M166 564 Q167 568.5 171.6 568.6 Q176.5 568.4 177.5 564 Q175 567 171.5 566.8 Q168 566.5 166 564Z" fill="#e2364a"/><path d="M165.8 562 Q166.5 556 172 556.2 Q169.5 557.5 169.8 560 Q168 560 167.5 563Z" fill="#ffb13b"/><path d="M174 556.5 Q177.5 558 177.6 562" stroke="#ffd04a" stroke-width="1.4" fill="none"/><rect x="209.9" y="558.2" width="10.4" height="9" fill="#8b9093"/><rect x="209.9" y="558.2" width="10.4" height="1.7" fill="#3e5a8a"/><rect x="253.4" y="557" width="10" height="10" rx="1.2" fill="#3a3f42"/><path d="M257 565 L259 560 L261 560.5" stroke="#5a5f62" stroke-width="0.9" fill="none"/><circle cx="263.8" cy="567" r="5.2" fill="#2a2f32"/><circle cx="263.8" cy="567" r="4.4" fill="#e6e7e8"/><text x="263.8" y="569.7" font-family="Liberation Sans" font-weight="bold" font-size="7.8" text-anchor="middle" fill="#1e2326">2</text><path d="M302.3 556.3 C306.6 556.3 308.3 558.2 308.3 561.6 C308.3 565 306.6 566.6 302.6 566.8 L300.8 569 V566.6 C297.6 566 296.6 564.6 296.6 561.6 C296.6 558.2 298.2 556.3 302.3 556.3Z" fill="#6f54a8"/><path d="M302.3 557.5 C305.7 557.5 307 559 307 561.6 C307 564.3 305.6 565.6 302.4 565.6 L301.6 566.6 V565.4 C299 565 297.9 564 297.9 561.6 C297.9 559 299.1 557.5 302.3 557.5Z" fill="#34294f"/><path d="M300.2 559.2 Q299.8 561.8 302.2 564 Q304 565 304.8 563.6 L303.8 562.6 L303 563.1 Q301.5 562.2 301.1 560.8 L301.7 560.1 L300.9 559Z" fill="#b9a6e0"/><circle cx="345.7" cy="562.2" r="6" fill="#2ca3df"/><path d="M342.2 562 L349.2 559.2 L348 565.6 L345.8 564 L344.6 565.3 L344.6 563.3 L347.6 560.5 L343.9 562.9 Z" fill="#fff"/><path d="M389.2 555.5 V562.5 M386.3 560 L389.2 563 L392.1 560" stroke="#62676a" stroke-width="1.6" fill="none"/><rect x="385.3" y="565.5" width="8" height="1.2" fill="#62676a"/><circle cx="394.8" cy="567" r="5.2" fill="#2a2f32"/><circle cx="394.8" cy="567" r="4.4" fill="#e6e7e8"/><text x="394.8" y="569.7" font-family="Liberation Sans" font-weight="bold" font-size="7.8" text-anchor="middle" fill="#1e2326">2</text><path d="M428.3 557.6 L436.5 556.2 L439 565.2 L430.6 566.8 Z" fill="#eeeeee"/><path d="M431 559.6 H435.4 M433.2 559.6 V564.6" stroke="#9a9a9a" stroke-width="1"/><circle cx="439.2" cy="567" r="5.2" fill="#2a2f32"/><circle cx="439.2" cy="567" r="4.4" fill="#e6e7e8"/><text x="439.2" y="569.7" font-family="Liberation Sans" font-weight="bold" font-size="7.8" text-anchor="middle" fill="#1e2326">2</text><path d="M472.8 567.5 C473.5 562 477.5 557.5 484.4 556.7 C483.2 560 483.2 564 484 567.5Z" fill="#2a5fd0"/><path d="M476 567.5 C477 562.5 480 559 484.4 556.7 C483.2 560 483.2 564 484 567.5Z" fill="#4b8df0" opacity="0.7"/><rect x="469.8" y="574.3" width="44.5" height="1.7" fill="#2db594"/><rect x="524.5" y="553.8" width="18.5" height="17.6" fill="#17a283"/><rect x="524.5" y="553.8" width="18.5" height="1.5" fill="#0c3a33"/><rect x="530" y="569.4" width="7.5" height="2" fill="#0c3a33"/><rect x="547" y="549" width="47.8" height="25.3" fill="#fbfbfb"/><defs><linearGradient id="tfin" x1="0" y1="0" x2="0.6" y2="1"><stop offset="0" stop-color="#1f78ec"/><stop offset="0.75" stop-color="#0a3fb8"/><stop offset="1" stop-color="#5a86d8"/></linearGradient></defs><path d="M562.5 551.6 Q567 549.5 574.5 550.6 Q570 552 562.5 552.6Z" fill="#f6a394"/><path d="M558.7 572.4 C560 561 568 552 582 551 C579.5 556 579.5 565 581.2 572.4Z" fill="url(#tfin)"/><rect x="547" y="574.3" width="47.8" height="1" fill="#9a9a9a"/><circle cx="651.6" cy="562.4" r="6.8" fill="none" stroke="#d9dcdd" stroke-width="1.2"/><line x1="653.10" y1="562.40" x2="656.00" y2="562.40" stroke="#e8eaeb" stroke-width="1"/><line x1="652.66" y1="563.46" x2="654.71" y2="565.51" stroke="#e8eaeb" stroke-width="1"/><line x1="651.60" y1="563.90" x2="651.60" y2="566.80" stroke="#e8eaeb" stroke-width="1"/><line x1="650.54" y1="563.46" x2="648.49" y2="565.51" stroke="#e8eaeb" stroke-width="1"/><line x1="650.10" y1="562.40" x2="647.20" y2="562.40" stroke="#e8eaeb" stroke-width="1"/><line x1="650.54" y1="561.34" x2="648.49" y2="559.29" stroke="#e8eaeb" stroke-width="1"/><line x1="651.60" y1="560.90" x2="651.60" y2="558.00" stroke="#e8eaeb" stroke-width="1"/><line x1="652.66" y1="561.34" x2="654.71" y2="559.29" stroke="#e8eaeb" stroke-width="1"/><circle cx="651.6" cy="562.4" r="1.8" fill="#f2f2f2"/><path d="M664 559.8 H666.3 L669.6 557 V567.8 L666.3 565 H664Z" fill="#d6d8d9"/><path d="M671.5 559 Q674 562.4 671.5 565.8" stroke="#d6d8d9" stroke-width="1.2" fill="none"/><path d="M684.5 558 Q688 555.5 691.5 558.5 Q692.5 562 690 565 L686 567 Q683.5 563 684.5 558Z" fill="none" stroke="#4b5154" stroke-width="1.3"/><line x1="683" y1="557" x2="693" y2="567" stroke="#4b5154" stroke-width="1.2"/><path d="M698.8 562 L713 556 L710.5 567.2 L706 564.6 L704.2 567 L703.8 563.6 L709.6 558.6 L702.4 563 Z" fill="#e6e8e9"/><path d="M722.7 555.3 C728.8 555.3 730.3 558 730.3 562 C730.3 566.2 728.5 568.5 723.8 568.6 L721.4 571.3 V568.3 C716.6 567.5 715.2 565.5 715.2 562 C715.2 558 717 555.3 722.7 555.3Z" fill="#7b65c2"/><path d="M719.3 558.6 Q718.8 562.6 722.5 566 Q725.5 567.6 726.6 565.3 L725 563.7 L723.8 564.5 Q721.5 563.2 720.8 561 L721.7 559.9 L720.5 558.2Z" fill="#f6f4fb"/><rect x="734.4" y="556.3" width="14.3" height="12.3" fill="#2f3a2c" stroke="#55604f" stroke-width="0.6"/><rect x="735" y="557" width="13" height="11" fill="#2f5a2a"/><path d="M739.6 557.2 H743.6 V560.8 H746 L741.6 565.6 L737.2 560.8 H739.6Z" fill="none" stroke="#c9e38a" stroke-width="0.9"/><rect x="755.6" y="557.5" width="7.4" height="10.3" rx="0.6" fill="#e9ebec"/><rect x="757.6" y="556.2" width="3.4" height="1.5" fill="#e9ebec"/><path d="M759.8 559.2 L757.8 562.8 H759.4 L758.6 566 L761 561.9 H759.4Z" fill="#2a2f32"/><path d="M777.3 556 L782.8 557.8 V562.5 Q782 567 777.3 569 Q772.6 567 771.8 562.5 V557.8Z" fill="#e4e6e7"/><rect x="776.6" y="560.8" width="1.5" height="5" fill="#1b2023"/><circle cx="777.3" cy="558.9" r="0.9" fill="#1b2023"/><circle cx="783" cy="568" r="1.3" fill="#3d7ee8"/><path d="M792 566.5 L798.5 559 Q800.5 557 799.5 556.5 Q798.5 556 797 557.5 L791.8 563.5 Q790.5 565.5 792 566.8 Q793.5 568 795.5 566 L801 559.8" fill="none" stroke="#d9dbdc" stroke-width="1.1"/><path d="M808 559.3 Q813.6 554.8 819.3 559.3 L813.65 566.6Z" fill="#e7e9ea"/><path d="M828.2 559.6 H830.8 L834.5 556.4 V568.4 L830.8 565.2 H828.2Z" fill="#e3e5e6"/><path d="M836.6 558.6 Q839.8 562.4 836.6 566.2" stroke="#e3e5e6" stroke-width="1.3" fill="none"/><circle cx="934.3" cy="562.4" r="9" fill="#78b943"/><circle cx="934.3" cy="562.4" r="5.4" fill="none" stroke="#f4f8ef" stroke-width="1.3"/><path d="M931.6 562.4 H936.2 M934.8 560.6 L936.6 562.4 L934.8 564.2" stroke="#f4f8ef" stroke-width="1.1" fill="none"/><rect x="952.4" y="550.8" width="2.6" height="23.2" rx="1.2" fill="#7e7cf0"/><rect x="990.2" y="550.30" width="33.1" height="1.87" fill="#c7323f"/><rect x="990.2" y="552.12" width="33.1" height="1.87" fill="#f5f5f5"/><rect x="990.2" y="553.93" width="33.1" height="1.87" fill="#c7323f"/><rect x="990.2" y="555.75" width="33.1" height="1.87" fill="#f5f5f5"/><rect x="990.2" y="557.56" width="33.1" height="1.87" fill="#c7323f"/><rect x="990.2" y="559.38" width="33.1" height="1.87" fill="#f5f5f5"/><rect x="990.2" y="561.19" width="33.1" height="1.87" fill="#c7323f"/><rect x="990.2" y="563.01" width="33.1" height="1.87" fill="#f5f5f5"/><rect x="990.2" y="564.82" width="33.1" height="1.87" fill="#c7323f"/><rect x="990.2" y="566.64" width="33.1" height="1.87" fill="#f5f5f5"/><rect x="990.2" y="568.45" width="33.1" height="1.87" fill="#c7323f"/><rect x="990.2" y="570.27" width="33.1" height="1.87" fill="#f5f5f5"/><rect x="990.2" y="572.08" width="33.1" height="1.87" fill="#c7323f"/><rect x="990.2" y="550.3" width="13.90" height="12.71" fill="#3b4687"/><rect x="991.30" y="551.40" width="0.8" height="0.8" fill="#d8dbef"/><rect x="993.50" y="551.40" width="0.8" height="0.8" fill="#d8dbef"/><rect x="995.70" y="551.40" width="0.8" height="0.8" fill="#d8dbef"/><rect x="997.90" y="551.40" width="0.8" height="0.8" fill="#d8dbef"/><rect x="1000.10" y="551.40" width="0.8" height="0.8" fill="#d8dbef"/><rect x="1002.30" y="551.40" width="0.8" height="0.8" fill="#d8dbef"/><rect x="991.30" y="553.80" width="0.8" height="0.8" fill="#d8dbef"/><rect x="993.50" y="553.80" width="0.8" height="0.8" fill="#d8dbef"/><rect x="995.70" y="553.80" width="0.8" height="0.8" fill="#d8dbef"/><rect x="997.90" y="553.80" width="0.8" height="0.8" fill="#d8dbef"/><rect x="1000.10" y="553.80" width="0.8" height="0.8" fill="#d8dbef"/><rect x="1002.30" y="553.80" width="0.8" height="0.8" fill="#d8dbef"/><rect x="991.30" y="556.20" width="0.8" height="0.8" fill="#d8dbef"/><rect x="993.50" y="556.20" width="0.8" height="0.8" fill="#d8dbef"/><rect x="995.70" y="556.20" width="0.8" height="0.8" fill="#d8dbef"/><rect x="997.90" y="556.20" width="0.8" height="0.8" fill="#d8dbef"/><rect x="1000.10" y="556.20" width="0.8" height="0.8" fill="#d8dbef"/><rect x="1002.30" y="556.20" width="0.8" height="0.8" fill="#d8dbef"/><rect x="991.30" y="558.60" width="0.8" height="0.8" fill="#d8dbef"/><rect x="993.50" y="558.60" width="0.8" height="0.8" fill="#d8dbef"/><rect x="995.70" y="558.60" width="0.8" height="0.8" fill="#d8dbef"/><rect x="997.90" y="558.60" width="0.8" height="0.8" fill="#d8dbef"/><rect x="1000.10" y="558.60" width="0.8" height="0.8" fill="#d8dbef"/><rect x="1002.30" y="558.60" width="0.8" height="0.8" fill="#d8dbef"/><rect x="991.30" y="561.00" width="0.8" height="0.8" fill="#d8dbef"/><rect x="993.50" y="561.00" width="0.8" height="0.8" fill="#d8dbef"/><rect x="995.70" y="561.00" width="0.8" height="0.8" fill="#d8dbef"/><rect x="997.90" y="561.00" width="0.8" height="0.8" fill="#d8dbef"/><rect x="1000.10" y="561.00" width="0.8" height="0.8" fill="#d8dbef"/><rect x="1002.30" y="561.00" width="0.8" height="0.8" fill="#d8dbef"/></svg><span class="tt" style="left:54.0px;color:#bfc1c2">Ae...</span><span class="tt" style="left:97.8px;color:#bfc1c2">Br...</span><span class="tt" style="left:141.0px;color:#bfc1c2">Ab...</span><span class="tt" style="left:184.7px;color:#bfc1c2">Пе...</span><span class="tt" style="left:227.9px;color:#bfc1c2">[0...</span><span class="tt" style="left:271.7px;color:#bfc1c2">pa...</span><span class="tt" style="left:315.0px;color:#bfc1c2">[Vi...</span><span class="tt" style="left:358.9px;color:#bfc1c2">Tel...</span><span class="tt" style="left:403.3px;color:#bfc1c2">Th...</span><span class="tt" style="left:447.0px;color:#bfc1c2">Ty...</span><span class="tt" style="left:491.3px;color:#f2f3f3">*wl...</span><span class="tt" style="left:849.9px;font-weight:bold;color:#cfd1d2;font-size:10.6px;transform:scaleY(1.02)">н 22 ou, 20:02</span><span class="tt" style="left:957.7px;font-weight:bold;color:#cfd1d2;font-size:10.6px;transform:scaleY(1.02)">100%</span>
</body></html>
